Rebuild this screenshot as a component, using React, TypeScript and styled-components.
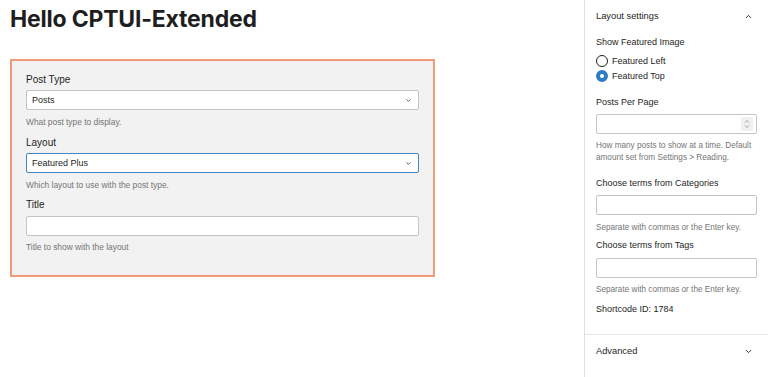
import React from 'react';
import styled, { createGlobalStyle } from 'styled-components';

const GlobalStyle = createGlobalStyle`
  html, body {
    margin: 0;
    padding: 0;
    background: #ffffff;
    font-family: "Liberation Sans", Arial, sans-serif;
    color: #1e1e1e;
  }
`;

const Page = styled.div`
  display: flex;
  width: 768px;
  height: 377px;
  overflow: hidden;
`;

const Main = styled.main`
  flex: 0 0 584px;
  padding: 6px 0 0 10px;
  box-sizing: border-box;
`;

const Heading = styled.h1`
  margin: 0;
  font-family: Inter, "Noto Sans", sans-serif;
  font-size: 23px;
  line-height: 26px;
  font-weight: 700;
  letter-spacing: -0.2px;
`;

const Block = styled.div`
  margin-top: 27px;
  width: 425px;
  height: 218px;
  box-sizing: border-box;
  border: 2px solid #ef9b7c;
  background: #f2f2f2;
  padding: 12px 14px 0;
  display: flex;
  flex-direction: column;
`;

const Label = styled.div<{ $top?: number }>`
  flex-shrink: 0;
  font-size: 10px;
  line-height: 14px;
  margin-top: ${(p) => p.$top ?? 0}px;
`;

const Help = styled.div<{ $top?: number; $size?: number }>`
  flex-shrink: 0;
  font-size: ${(p) => p.$size ?? 8.4}px;
  line-height: 12px;
  color: #757575;
  margin-top: ${(p) => p.$top ?? 0}px;
`;

const SelectBox = styled.div<{ $focus?: boolean }>`
  flex-shrink: 0;
  margin-top: 3px;
  height: 20px;
  box-sizing: border-box;
  background: #fff;
  border: 1px solid ${(p) => (p.$focus ? '#3f86c6' : '#c4c4c4')};
  border-radius: 2px;
  display: flex;
  align-items: center;
  justify-content: space-between;
  padding: 0 6px 0 5px;
  font-size: 9px;
`;

const TextBox = styled.div<{ $top?: number }>`
  flex-shrink: 0;
  margin-top: ${(p) => p.$top ?? 4}px;
  height: 20px;
  box-sizing: border-box;
  background: #fff;
  border: 1px solid #c4c4c4;
  border-radius: 2px;
  display: flex;
  align-items: center;
  justify-content: flex-end;
  padding: 0 3px;
`;

const Sidebar = styled.aside`
  flex: 1;
  border-left: 1px solid #e0e0e0;
  display: flex;
  flex-direction: column;
`;

const Panel = styled.section`
  flex-shrink: 0;
  padding: 9px 11px 0 11px;
  border-bottom: 1px solid #e6e6e6;
  height: 335px;
  box-sizing: border-box;
  display: flex;
  flex-direction: column;
`;

const PanelHead = styled.div`
  flex-shrink: 0;
  display: flex;
  align-items: center;
  justify-content: space-between;
  height: 14px;
  font-size: 9.3px;
  font-weight: 500;
  padding-right: 4px;
`;

const Advanced = styled(PanelHead)`
  padding: 9px 15px 0 11px;
`;

const SideLabel = styled.div<{ $top?: number }>`
  flex-shrink: 0;
  font-size: 9px;
  line-height: 13px;
  margin-top: ${(p) => p.$top ?? 0}px;
`;

const Radios = styled.div`
  margin-top: 4px;
  display: flex;
  flex-direction: column;
`;

const RadioRow = styled.label`
  display: flex;
  align-items: center;
  gap: 4px;
  height: 15px;
  font-size: 9px;
`;

const Radio = styled.span<{ $on?: boolean }>`
  width: 12px;
  height: 12px;
  box-sizing: border-box;
  border-radius: 50%;
  border: ${(p) => (p.$on ? '4px solid #2f7bc4' : '1px solid #1e1e1e')};
  background: #fff;
`;

const Spinner = styled.div`
  width: 12px;
  height: 14px;
  background: #f0f0f0;
  border-radius: 2px;
  display: flex;
  align-items: center;
  justify-content: center;
`;

const Chevron = ({ up = false, size = 9 }: { up?: boolean; size?: number }) => (
  <svg width={size} height={size} viewBox="0 0 24 24" fill="none">
    <path
      d={up ? 'M6 15l6-6 6 6' : 'M6 9l6 6 6-6'}
      stroke="#1e1e1e"
      strokeWidth={2.4}
      strokeLinecap="round"
      strokeLinejoin="round"
    />
  </svg>
);

export default function App() {
  return (
    <>
      <GlobalStyle />
      <Page>
        <Main>
          <Heading>Hello CPTUI-Extended</Heading>
          <Block>
            <Label>Post Type</Label>
            <SelectBox>
              <span>Posts</span>
              <Chevron size={7} />
            </SelectBox>
            <Help $top={6}>What post type to display.</Help>
            <Label $top={8}>Layout</Label>
            <SelectBox $focus>
              <span>Featured Plus</span>
              <Chevron size={7} />
            </SelectBox>
            <Help $top={6}>Which layout to use with the post type.</Help>
            <Label $top={7}>Title</Label>
            <TextBox $top={4} />
            <Help $top={5}>Title to show with the layout</Help>
          </Block>
        </Main>
        <Sidebar>
          <Panel>
            <PanelHead>
              <span>Layout settings</span>
              <Chevron up />
            </PanelHead>
            <SideLabel $top={13}>Show Featured Image</SideLabel>
            <Radios>
              <RadioRow>
                <Radio />
                Featured Left
              </RadioRow>
              <RadioRow>
                <Radio $on />
                Featured Top
              </RadioRow>
            </Radios>
            <SideLabel $top={13}>Posts Per Page</SideLabel>
            <TextBox $top={5}>
              <Spinner>
                <svg width="6" height="10" viewBox="0 0 6 10" fill="none">
                  <path d="M1 3.5L3 1.5L5 3.5M1 6.5L3 8.5L5 6.5" stroke="#8c8c8c" strokeWidth="0.8" />
                </svg>
              </Spinner>
            </TextBox>
            <Help $top={6} $size={8.2}>
              How many posts to show at a time. Default amount set from Settings &gt; Reading.
            </Help>
            <SideLabel $top={13}>Choose terms from Categories</SideLabel>
            <TextBox $top={5} />
            <Help $top={7} $size={8.2}>Separate with commas or the Enter key.</Help>
            <SideLabel $top={5}>Choose terms from Tags</SideLabel>
            <TextBox $top={6} />
            <Help $top={6} $size={8.2}>Separate with commas or the Enter key.</Help>
            <SideLabel $top={7}>Shortcode ID: 1784</SideLabel>
          </Panel>
          <Advanced>
            <span>Advanced</span>
            <Chevron />
          </Advanced>
        </Sidebar>
      </Page>
    </>
  );
}
